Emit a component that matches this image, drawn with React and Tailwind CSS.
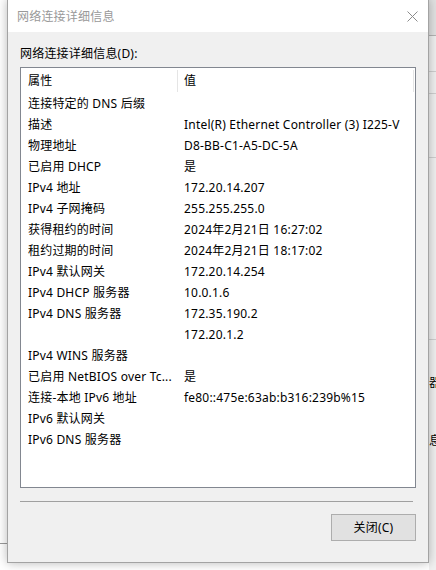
import React from 'react';

const rows = [
  ['连接特定的 DNS 后缀', ''],
  ['描述', 'Intel(R) Ethernet Controller (3) I225-V'],
  ['物理地址', 'D8-BB-C1-A5-DC-5A'],
  ['已启用 DHCP', '是'],
  ['IPv4 地址', '172.20.14.207'],
  ['IPv4 子网掩码', '255.255.255.0'],
  ['获得租约的时间', '2024年2月21日 16:27:02'],
  ['租约过期的时间', '2024年2月21日 18:17:02'],
  ['IPv4 默认网关', '172.20.14.254'],
  ['IPv4 DHCP 服务器', '10.0.1.6'],
  ['IPv4 DNS 服务器', '172.35.190.2'],
  ['', '172.20.1.2'],
  ['IPv4 WINS 服务器', ''],
  ['已启用 NetBIOS over Tc...', '是'],
  ['连接-本地 IPv6 地址', 'fe80::475e:63ab:b316:239b%15'],
  ['IPv6 默认网关', ''],
  ['IPv6 DNS 服务器', ''],
];

export default function App() {
  return (
    <div className="relative h-[570px] w-[436px] overflow-hidden bg-white font-['Noto_Sans','Noto_Sans_CJK_SC',sans-serif] text-[12px] tracking-[0.2px] text-black">
      <Desktop />
      <DetailsDialog />
    </div>
  );
}

function Desktop() {
  return (
    <>
      {/* window behind, on the right */}
      <div className="absolute left-[429px] top-0 h-[570px] w-[20px] overflow-hidden bg-[#f0f0f0]">
        <div className="h-[36px] border-b border-[#b4b4b4] bg-[#e2e2e2]" />
        <div className="h-[36px] border-b border-[#cfcfcf]" />
        <div className="h-[22px] border-b border-[#cfcfcf]" />
        <div className="h-[64px] border-b border-[#cfcfcf]" />
        <div className="h-[182px] border-b border-[#cfcfcf]" />
        <div className="mt-[35px] leading-[16px]">器</div>
        <div className="mt-[42px] leading-[16px]">息</div>
      </div>
      {/* window behind, on the left */}
      <div className="absolute left-0 top-[543px] h-px w-[8px] bg-[#9a9a9a]" />
    </>
  );
}

function DetailsDialog() {
  return (
    <div className="absolute left-[7px] top-[-1px] flex h-[564px] w-[422px] flex-col border border-[#a3a3a3] bg-[#f0f0f0] shadow-[0_0_10px_rgba(0,0,0,0.28)]">
      <div className="flex h-[32px] shrink-0 items-center justify-between bg-white pl-[9px] pr-[10px]">
        <span className="pt-px text-[#999999]">网络连接详细信息</span>
        <svg width="11" height="11" viewBox="0 0 11 11" className="mt-px">
          <path d="M0.5 0.5 L10.5 10.5 M10.5 0.5 L0.5 10.5" stroke="#8c8c8c" strokeWidth="1" />
        </svg>
      </div>

      <div className="flex flex-1 flex-col px-[12px] pt-[14px]">
        <div className="h-[16px] leading-[16px]">网络连接详细信息(D):</div>

        <div className="mt-[5px] h-[421px] border border-[#828790] bg-white">
          <div className="flex h-[25px] items-center">
            <div className="flex h-full w-[156px] items-center pl-[7px]">属性</div>
            <div className="h-[22px] w-px bg-[#e5e5e5]" />
            <div className="flex h-full w-[235px] items-center pl-[6px]">值</div>
            <div className="h-[22px] w-px bg-[#e5e5e5]" />
          </div>
          {rows.map(([label, value], i) => (
            <div key={i} className="flex h-[21px] items-center whitespace-nowrap">
              <div className="w-[157px] overflow-hidden pl-[7px]">{label}</div>
              <div className="pl-[6px]">{value}</div>
            </div>
          ))}
        </div>

        <div className="mt-[13px] h-px w-[393px] bg-[#a0a0a0]" />

        <div className="mt-[12px] flex justify-end">
          <button
            type="button"
            className="flex h-[27px] w-[85px] items-center justify-center border border-[#adadad] bg-[#e1e1e1] leading-none"
          >
            关闭(C)
          </button>
        </div>
      </div>
    </div>
  );
}
